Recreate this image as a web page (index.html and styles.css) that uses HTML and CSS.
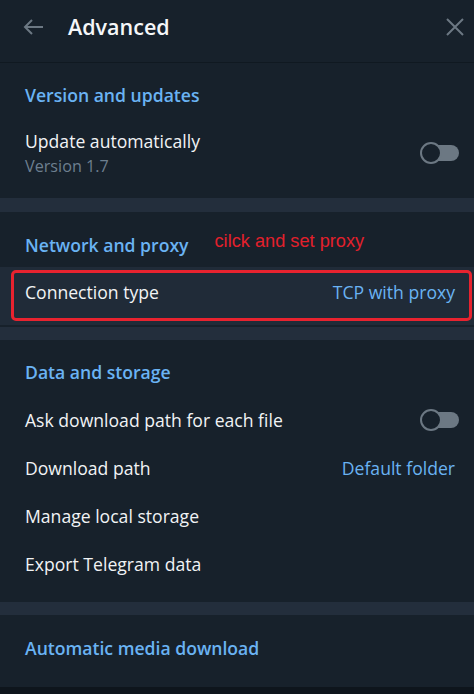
FILE: index.html
```html
<!DOCTYPE html>
<html>
<head>
<meta charset="utf-8">
<link rel="stylesheet" href="styles.css">
</head>
<body>
<div class="panel">
  <header class="topbar">
    <svg class="icon back" width="24" height="24" viewBox="0 0 24 24"><path d="M22 12H4M11 5l-7 7 7 7" fill="none" stroke="#6c7883" stroke-width="2"/></svg>
    <div class="title">Advanced</div>
    <svg class="icon close" width="20" height="20" viewBox="0 0 20 20"><path d="M2 2l16 16M18 2L2 18" fill="none" stroke="#6c7883" stroke-width="2"/></svg>
  </header>

  <section class="sec sec1">
    <div class="sec-title">Version and updates</div>
    <div class="row tall">
      <div class="labels">
        <div class="label">Update automatically</div>
        <div class="sub">Version 1.7</div>
      </div>
      <div class="toggle"><span class="knob"></span></div>
    </div>
  </section>
  <div class="band b1"></div>

  <section class="sec sec2">
    <div class="sec-title with-note">Network and proxy <span class="note">cilck and set proxy</span></div>
    <div class="row hl">
      <div class="label">Connection type</div>
      <div class="value">TCP with proxy</div>
    </div>
  </section>
  <div class="band b2"></div>

  <section class="sec sec3">
    <div class="sec-title">Data and storage</div>
    <div class="row">
      <div class="label">Ask download path for each file</div>
      <div class="toggle"><span class="knob"></span></div>
    </div>
    <div class="row">
      <div class="label">Download path</div>
      <div class="value">Default folder</div>
    </div>
    <div class="row">
      <div class="label">Manage local storage</div>
    </div>
    <div class="row">
      <div class="label">Export Telegram data</div>
    </div>
  </section>
  <div class="band b3"></div>

  <section class="sec sec4">
    <div class="sec-title">Automatic media download</div>
  </section>
  <div class="bottom"></div>
</div>
</body>
</html>
```
FILE: styles.css
```css
* { box-sizing: border-box; }
html, body { margin: 0; padding: 0; }
body {
  background: #17212b;
  font-family: "Open Sans", "Noto Sans", sans-serif;
  color: #f1f3f5;
  width: 474px;
  height: 694px;
  overflow: hidden;
}
.panel { display: flex; flex-direction: column; height: 694px; }

.topbar {
  height: 63px;
  display: flex;
  align-items: center;
  border-bottom: 1px solid #101921;
  padding: 0 9px 9px 21px;
  flex: none;
}
.icon { display: block; flex: none; }
.title {
  font-size: 21.5px;
  font-weight: 600;
  margin-left: 23px;
  flex: 1;
  color: #f5f7f9;
  line-height: 28px;
}

.sec { display: flex; flex-direction: column; flex: none; }
.sec-title {
  color: #6ab3f3;
  font-weight: 600;
  font-size: 17.6px;
  padding-left: 25px;
  line-height: 24px;
}
.sec1 { height: 135px; padding-top: 20px; }
.sec2 { height: 115px; padding-top: 21px; }
.sec3 { height: 262px; padding-top: 20px; }
.sec4 { height: 72px; padding-top: 21px; }

.band { background: #232e3c; flex: none; }
.b1 { height: 14px; }
.b2 { height: 13px; }
.b3 { height: 13px; }
.bottom { background: #0e151c; flex: 1; }

.row {
  display: flex;
  align-items: center;
  justify-content: space-between;
  padding: 0 15px 0 25px;
  height: 48px;
}
.sec1 .row { margin-top: 16px; height: 60px; }
.sec3 .sec-title { margin-bottom: 12px; }
.label { font-size: 17.6px; line-height: 24px; color: #f1f3f5; }
.sub { font-size: 16.2px; color: #6d7f8f; line-height: 22px; margin-top: 2px; }
.value { font-size: 17.6px; color: #6ab3f3; padding-right: 4px; }

.with-note { display: flex; align-items: center; }
.note {
  font-family: "Liberation Sans", Arial, sans-serif;
  font-weight: 400;
  color: #e3202c;
  font-size: 18.2px;
  margin-left: 26px;
  margin-top: -8px;
}

.hl {
  position: relative;
  background: #202b38;
  margin-top: 10px;
  height: 58px;
  padding-bottom: 9px;
}
.hl::after {
  content: "";
  position: absolute;
  left: 11px; right: 2px; top: 3px; bottom: 4px;
  border: 3px solid #e8232f;
  border-radius: 5px;
}

.toggle {
  position: relative;
  width: 38px;
  height: 16px;
  border-radius: 8px;
  background: #6c7883;
}
.knob {
  position: absolute;
  left: -1px; top: -3px;
  width: 22px; height: 22px;
  border-radius: 50%;
  background: #17212b;
  border: 2px solid #6c7883;
}
```
